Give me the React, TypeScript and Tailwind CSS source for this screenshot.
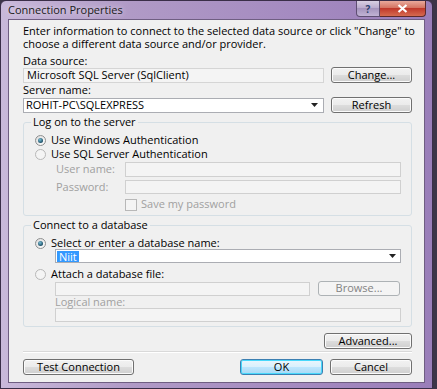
import React from "react";

const BTN =
  "flex items-center justify-center rounded-[3px] border border-[#707070] bg-[linear-gradient(#f2f2f2,#ebebeb_50%,#dddddd_50%,#cfcfcf)] shadow-[inset_0_0_0_1px_#fbfbfb] text-black";

function Button({ label, className = "" }: { label: string; className?: string }) {
  return <div className={`${BTN} ${className}`}>{label}</div>;
}

function Radio({ checked, label, disabled }: { checked?: boolean; label: string; disabled?: boolean }) {
  return (
    <div className="flex items-center h-[12px] ml-[5px]">
      <div
        className={`w-[11px] h-[11px] rounded-full border flex items-center justify-center ${
          disabled
            ? "border-[#b8b8b8] bg-[#f4f4f4]"
            : "border-[#8e8f8f] bg-[linear-gradient(135deg,#dcdcdc,#ffffff)]"
        }`}
      >
        {checked && (
          <div className="w-[5px] h-[5px] rounded-full bg-[radial-gradient(circle_at_40%_35%,#7ac0d8,#1d4f66_70%)]" />
        )}
      </div>
      <span className="ml-[5px]">{label}</span>
    </div>
  );
}

function Arrow() {
  return (
    <svg width="7" height="4" viewBox="0 0 7 4" className="shrink-0">
      <path d="M0 0 H7 L3.5 4 Z" fill="#222" />
    </svg>
  );
}

export default function App() {
  return (
    <div className="w-[437px] h-[389px] bg-[#3d3548] overflow-hidden font-['Open_Sans',sans-serif] text-[11px] text-black">
      <div className="w-[433px] h-[389px] rounded-t-[6px] border border-[#3a2e48] bg-[linear-gradient(90deg,#c9b9da,#b09ac6_30%,#a48ac0_70%,#9a7eb9)] flex flex-col px-[7px] pb-[5px]">
        {/* Title bar */}
        <div className="h-[18px] flex items-start justify-between">
          <span className="mt-[1px] text-[11px] text-[#1a1a1a] leading-[16px] [text-shadow:0_0_5px_#ece6f2]">
            Connection Properties
          </span>
          <div className="flex -mr-[1px]">
            <div className="w-[24px] h-[16px] rounded-bl-[4px] border border-[#5e4e72] border-t-0 bg-[linear-gradient(#d8cfe2,#b8a8cc_50%,#a594bd_50%,#c1b3d4)] flex items-center justify-center text-[10px] font-bold text-[#2b3f6e] leading-none">
              ?
            </div>
            <div className="w-[46px] h-[16px] rounded-br-[4px] border border-[#5e2a2a] border-t-0 border-l-0 bg-[linear-gradient(#e9a99b,#d26e5c_50%,#c0392b_50%,#d66a4f)] flex items-center justify-center">
              <svg width="11" height="9" viewBox="0 0 11 9">
                <path d="M1.5 1 L9.5 8 M9.5 1 L1.5 8" stroke="#ffffff" strokeWidth="2.2" />
              </svg>
            </div>
          </div>
        </div>

        {/* Client area */}
        <div className="flex-1 bg-[#f0f0f0] border border-[#6f5e82] flex flex-col pl-[14px] pr-[12px]">
          <p className="mt-[4px] -mr-[8px] leading-[13px]">
            Enter information to connect to the selected data source or click "Change" to choose a different data source and/or provider.
          </p>

          <div className="mt-[5px] leading-[12px]">Data source:</div>
          <div className="flex items-center h-[16px]">
            <div className="w-[301px] h-[15px] border border-[#d5d5d5] bg-[#f4f4f4] flex items-center pl-[3px]">
              Microsoft SQL Server (SqlClient)
            </div>
            <Button label="Change..." className="ml-auto w-[81px] h-[16px]" />
          </div>

          <div className="mt-[1px] leading-[12px]">Server name:</div>
          <div className="mt-[1px] flex items-center h-[16px]">
            <div className="w-[301px] h-[15px] border border-[#abadb3] bg-white flex items-center pl-[2px] pr-[5px]">
              <span className="flex-1">ROHIT-PC\SQLEXPRESS</span>
              <Arrow />
            </div>
            <Button label="Refresh" className="ml-auto w-[81px] h-[16px]" />
          </div>

          {/* Log on group */}
          <fieldset className="mt-[3px] border border-[#d5dfe5] rounded-[3px] px-[6px] pb-[4px]">
            <legend className="px-[2px] ml-[1px] leading-[12px]">Log on to the server</legend>
            <div className="mt-[6px]">
              <Radio checked label="Use Windows Authentication" />
            </div>
            <div className="mt-[2px]">
              <Radio disabled label="Use SQL Server Authentication" />
            </div>
            <div className="mt-[2px] flex items-center h-[15px]">
              <span className="w-[95px] pl-[26px] text-[#a0a0a0]">User name:</span>
              <div className="w-[276px] h-[15px] border border-[#d0d0d0] bg-[#f4f4f4]" />
            </div>
            <div className="mt-[3px] flex items-center h-[14px]">
              <span className="w-[95px] pl-[26px] text-[#a0a0a0]">Password:</span>
              <div className="w-[276px] h-[14px] border border-[#d0d0d0] bg-[#f4f4f4]" />
            </div>
            <div className="mt-[4px] flex items-center h-[13px] pl-[95px]">
              <div className="w-[12px] h-[12px] border border-[#b8b8b8] bg-[#f4f4f4]" />
              <span className="ml-[4px] text-[#a0a0a0]">Save my password</span>
            </div>
          </fieldset>

          {/* Database group */}
          <fieldset className="mt-[3px] border border-[#d5dfe5] rounded-[3px] px-[6px] pb-[4px]">
            <legend className="px-[2px] ml-[1px] leading-[12px]">Connect to a database</legend>
            <div className="mt-[6px]">
              <Radio checked label="Select or enter a database name:" />
            </div>
            <div className="ml-[25px] w-[346px] h-[14px] border border-[#abadb3] bg-white flex items-center pl-[1px] pr-[4px]">
              <span className="bg-[#3399ff] text-white leading-[11px] px-[2px]">Niit</span>
              <span className="flex-1" />
              <Arrow />
            </div>
            <div className="mt-[5px]">
              <Radio disabled label="Attach a database file:" />
            </div>
            <div className="mt-[1px] ml-[25px] flex items-center h-[15px]">
              <div className="w-[255px] h-[14px] border border-[#d0d0d0] bg-[#f4f4f4]" />
              <div className="ml-[8px] w-[82px] h-[15px] rounded-[3px] border border-[#adb2b5] bg-[#f4f4f4] flex items-center justify-center text-[#838383]">
                Browse...
              </div>
            </div>
            <div className="ml-[25px] leading-[11px] text-[#a0a0a0]">Logical name:</div>
            <div className="mt-[1px] ml-[25px] w-[346px] h-[14px] border border-[#d0d0d0] bg-[#f4f4f4]" />
          </fieldset>

          <div className="mt-[6px] flex justify-end">
            <Button label="Advanced..." className="w-[88px] h-[16px]" />
          </div>

          <div className="mt-[2px] h-px bg-[#d9d9d9] border-b border-white box-content" />

          <div className="mt-[6px] flex items-center h-[16px]">
            <Button label="Test Connection" className="w-[111px] h-[16px]" />
            <div
              className="ml-auto w-[83px] h-[16px] flex items-center justify-center rounded-[3px] border border-[#3c7fb1] bg-[linear-gradient(#eaf6fd,#d9f0fc_50%,#bee6fd_50%,#a7d9f5)] shadow-[inset_0_0_0_1px_#48d8fb]"
            >
              OK
            </div>
            <Button label="Cancel" className="ml-[7px] w-[82px] h-[16px]" />
          </div>
        </div>
      </div>
    </div>
  );
}
